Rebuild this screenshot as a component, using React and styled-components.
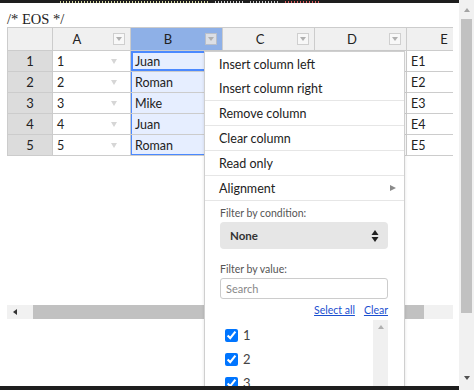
import React from "react";
import styled, { createGlobalStyle, css } from "styled-components";

const GlobalStyle = createGlobalStyle`
  html, body { margin: 0; padding: 0; background: #fff; }
  body { font-family: Lato, "Open Sans", sans-serif; }
  #root { width: 474px; height: 390px; overflow: hidden; }
`;

const UI = `Lato, "Open Sans", "Noto Sans", sans-serif`;

const Screen = styled.div`
  display: flex;
  width: 474px;
  height: 390px;
  overflow: hidden;
`;

const Page = styled.div`
  width: 459px;
  height: 390px;
  display: flex;
  flex-direction: column;
`;

const TopStrip = styled.div`
  height: 3px;
  background: #1e1e1e;
  display: flex;
  align-items: flex-end;
  gap: 5px;
  padding-left: 60px;
`;

const CodeFrag = styled.div`
  width: ${(p) => p.$w}px;
  height: 2px;
  background: repeating-linear-gradient(
    90deg,
    ${(p) => p.$c} 0 1px,
    transparent 1px 3px
  );
`;

const BottomStrip = styled.div`
  height: 4px;
  background: #1e1e1e;
`;

const Content = styled.div`
  flex: 1;
  position: relative;
  overflow: hidden;
  padding-left: 7px;
`;

const Title = styled.div`
  height: 24px;
  box-sizing: border-box;
  padding-top: 8px;
  font-family: "Liberation Serif", serif;
  font-size: 14.5px;
  line-height: 17px;
  color: #222;
`;

const TableArea = styled.div`
  width: 446px;
  height: 292px;
  display: flex;
  flex-direction: column;
  overflow: hidden;
`;

const Grid = styled.div`
  display: grid;
  grid-template-columns: 46px 78px 92px 92px 92px 92px;
  grid-auto-rows: 21px;
  grid-template-rows: 24px;
  width: 492px;
  font-family: ${UI};
  font-size: 12.5px;
  color: #222;
`;

const Cell = styled.div`
  box-sizing: border-box;
  border-right: 1px solid #ccc;
  border-bottom: 1px solid #ccc;
  ${(p) => p.$top && css`border-top: 1px solid #ccc;`}
  ${(p) => p.$first && css`border-left: 1px solid #ccc;`}
  background: ${(p) => p.$bg || "#fff"};
  display: flex;
  align-items: center;
  padding: 0 4px;
  white-space: nowrap;
  overflow: hidden;
  ${(p) =>
    p.$sel &&
    css`
      box-shadow: ${p.$sel};
    `}
`;

const HeaderCell = styled(Cell)`
  justify-content: center;
  padding: 0 5px 0 0;
  font-size: 13px;
`;

const HeaderLabel = styled.span`
  flex: 1;
  text-align: center;
  padding-right: ${(p) => p.$shift || 0}px;
`;

const FilterBtn = styled.span`
  width: 12px;
  height: 12px;
  box-sizing: border-box;
  border: 1px solid ${(p) => (p.$active ? "#b9bfca" : "#cfcfcf")};
  background: ${(p) => (p.$active ? "#dcdfe5" : "#f8f8f8")};
  display: flex;
  align-items: center;
  justify-content: center;
  &::after {
    content: "";
    border-left: 3px solid transparent;
    border-right: 3px solid transparent;
    border-top: 4px solid #b0b0b0;
  }
`;

const RowHeader = styled(Cell)`
  justify-content: center;
  padding: 0;
  font-size: 13px;
`;

const CellArrow = styled.span`
  margin-left: auto;
  margin-right: 9px;
  border-left: 3px solid transparent;
  border-right: 3px solid transparent;
  border-top: 5px solid #d6d6d6;
`;

const HScroll = styled.div`
  margin-top: auto;
  height: 14px;
  background: #f1f1f1;
  display: flex;
  align-items: stretch;
`;

const ArrowBox = styled.div`
  width: 16px;
  display: flex;
  align-items: center;
  justify-content: center;
`;

const LeftTri = styled.span`
  border-top: 3px solid transparent;
  border-bottom: 3px solid transparent;
  border-right: 4px solid #333;
`;

const HThumb = styled.div`
  margin-left: 10px;
  width: 391px;
  background: #c1c1c1;
`;

const Menu = styled.div`
  position: absolute;
  left: 204px;
  top: 48px;
  width: 201px;
  height: 400px;
  box-sizing: border-box;
  background: #fff;
  border: 1px solid #cfcfcf;
  box-shadow: 0 1px 3px rgba(0, 0, 0, 0.12);
  font-family: ${UI};
  color: #222;
`;

const MenuItem = styled.div`
  height: 24px;
  padding: 0 8px 0 14px;
  display: flex;
  align-items: center;
  justify-content: space-between;
  font-size: 12.5px;
  ${(p) => p.$sep && css`border-top: 1px solid #e6e6e6;`}
  ${(p) => p.$last && css`border-bottom: 1px solid #e6e6e6;`}
`;

const SubArrow = styled.span`
  border-top: 3.5px solid transparent;
  border-bottom: 3.5px solid transparent;
  border-left: 6px solid #8a8a8a;
`;

const FilterSection = styled.div`
  padding: 0 16px 0 15px;
  display: flex;
  flex-direction: column;
`;

const FilterLabel = styled.div`
  font-size: 10.5px;
  line-height: 14px;
  color: #555;
  margin-top: ${(p) => p.$mt}px;
  margin-bottom: ${(p) => p.$mb}px;
`;

const Select = styled.div`
  height: 27px;
  border-radius: 4px;
  background: #e6e6e6;
  display: flex;
  align-items: center;
  justify-content: space-between;
  padding: 0 9px 0 10px;
  font-size: 11.5px;
  font-weight: 700;
  color: #333;
`;

const Search = styled.div`
  height: 21px;
  box-sizing: border-box;
  border: 1px solid #ccc;
  border-radius: 3px;
  display: flex;
  align-items: center;
  padding-left: 5px;
  font-size: 11px;
  color: #888;
`;

const Links = styled.div`
  margin-top: 4px;
  height: 14px;
  display: flex;
  justify-content: flex-end;
  gap: 9px;
  font-size: 10.5px;
  line-height: 14px;
`;

const Link = styled.span`
  color: #1a4fcf;
  text-decoration: underline;
`;

const ValueList = styled.div`
  margin-top: 3px;
  height: 90px;
  display: flex;
`;

const ListItems = styled.div`
  flex: 1;
  padding: 3px 0 0 5px;
`;

const ListItem = styled.label`
  height: 24px;
  display: flex;
  align-items: center;
  gap: 5px;
  font-size: 13px;
  color: #444;
`;

const Check = styled.input`
  width: 13px;
  height: 13px;
  margin: 0;
  accent-color: #0075ff;
`;

const ListScroll = styled.div`
  width: 15px;
  background: #f0f0f0;
  display: flex;
  justify-content: center;
  padding-top: 5px;
  box-sizing: border-box;
`;

const UpTri = styled.span`
  width: 0;
  height: 0;
  border-left: 3.5px solid transparent;
  border-right: 3.5px solid transparent;
  border-bottom: 4px solid ${(p) => p.$c || "#a3a3a3"};
`;

const DownTri = styled.span`
  width: 0;
  height: 0;
  border-left: 3.5px solid transparent;
  border-right: 3.5px solid transparent;
  border-top: 4px solid ${(p) => p.$c || "#505050"};
`;

const VScroll = styled.div`
  width: 15px;
  height: 390px;
  background: #f1f1f1;
  display: flex;
  flex-direction: column;
  align-items: center;
`;

const VArrow = styled.div`
  height: ${(p) => p.$h}px;
  display: flex;
  align-items: center;
  justify-content: center;
`;

const VThumb = styled.div`
  width: 11px;
  height: 294px;
  background: #c1c1c1;
`;

const VSpacer = styled.div`
  flex: 1;
`;

const SortArrows = () => (
  <svg width="8" height="14" viewBox="0 0 8 14">
    <path d="M4 1 L7.5 6 L0.5 6 Z" fill="#222" />
    <path d="M4 13 L7.5 8 L0.5 8 Z" fill="#222" />
  </svg>
);

const cols = ["A", "B", "C", "D", "E"];
const shifts = { A: 12 };
const names = ["Juan", "Roman", "Mike", "Juan", "Roman"];
const frags = [
  { w: 150, c: "#d7d7a0" },
  { w: 30, c: "#cfcfcf" },
  { w: 30, c: "#c8c8c8" },
  { w: 36, c: "#e06060" },
];

const BLUE = "#4b89ff";

export default function App() {
  const rows = [1, 2, 3, 4, 5];
  return (
    <>
      <GlobalStyle />
      <Screen>
        <Page>
          <TopStrip>
            {frags.map((f, i) => (
              <CodeFrag key={i} $w={f.w} $c={f.c} />
            ))}
          </TopStrip>
          <Content>
            <Title>/* EOS */</Title>
            <TableArea>
              <Grid>
                <HeaderCell $top $first $bg="#f0f0f0" />
                {cols.map((c) => (
                  <HeaderCell key={c} $top $bg={c === "B" ? "#8eb0e7" : "#f0f0f0"}>
                    <HeaderLabel $shift={shifts[c]}>{c}</HeaderLabel>
                    <FilterBtn $active={c === "B"} />
                  </HeaderCell>
                ))}
                {rows.map((r, i) => (
                  <React.Fragment key={r}>
                    <RowHeader $first $bg="#dcdcdc">{r}</RowHeader>
                    <Cell>
                      {r}
                      <CellArrow />
                    </Cell>
                    <Cell
                      $bg="#e6eeff"
                      $sel={
                        i === 0
                          ? `inset 0 0 0 2px ${BLUE}`
                          : i === 4
                          ? `inset 1px 0 0 ${BLUE}, inset 0 -1px 0 ${BLUE}`
                          : `inset 1px 0 0 ${BLUE}`
                      }
                    >
                      {names[i]}
                    </Cell>
                    <Cell />
                    <Cell />
                    <Cell>E{r}</Cell>
                  </React.Fragment>
                ))}
              </Grid>
              <HScroll>
                <ArrowBox>
                  <LeftTri />
                </ArrowBox>
                <HThumb />
              </HScroll>
            </TableArea>

            <Menu>
              <MenuItem>Insert column left</MenuItem>
              <MenuItem>Insert column right</MenuItem>
              <MenuItem $sep>Remove column</MenuItem>
              <MenuItem $sep>Clear column</MenuItem>
              <MenuItem $sep>Read only</MenuItem>
              <MenuItem $sep $last>
                Alignment
                <SubArrow />
              </MenuItem>
              <FilterSection>
                <FilterLabel $mt={5} $mb={2}>Filter by condition:</FilterLabel>
                <Select>
                  None
                  <SortArrows />
                </Select>
                <FilterLabel $mt={13} $mb={2}>Filter by value:</FilterLabel>
                <Search>Search</Search>
                <Links>
                  <Link>Select all</Link>
                  <Link>Clear</Link>
                </Links>
                <ValueList>
                  <ListItems>
                    {[1, 2, 3].map((v) => (
                      <ListItem key={v}>
                        <Check type="checkbox" checked readOnly />
                        {v}
                      </ListItem>
                    ))}
                  </ListItems>
                  <ListScroll>
                    <UpTri $c="#b0b0b0" />
                  </ListScroll>
                </ValueList>
              </FilterSection>
            </Menu>
          </Content>
          <BottomStrip />
        </Page>
        <VScroll>
          <VArrow $h={19}>
            <UpTri />
          </VArrow>
          <VThumb />
          <VSpacer />
          <VArrow $h={24}>
            <DownTri />
          </VArrow>
        </VScroll>
      </Screen>
    </>
  );
}
